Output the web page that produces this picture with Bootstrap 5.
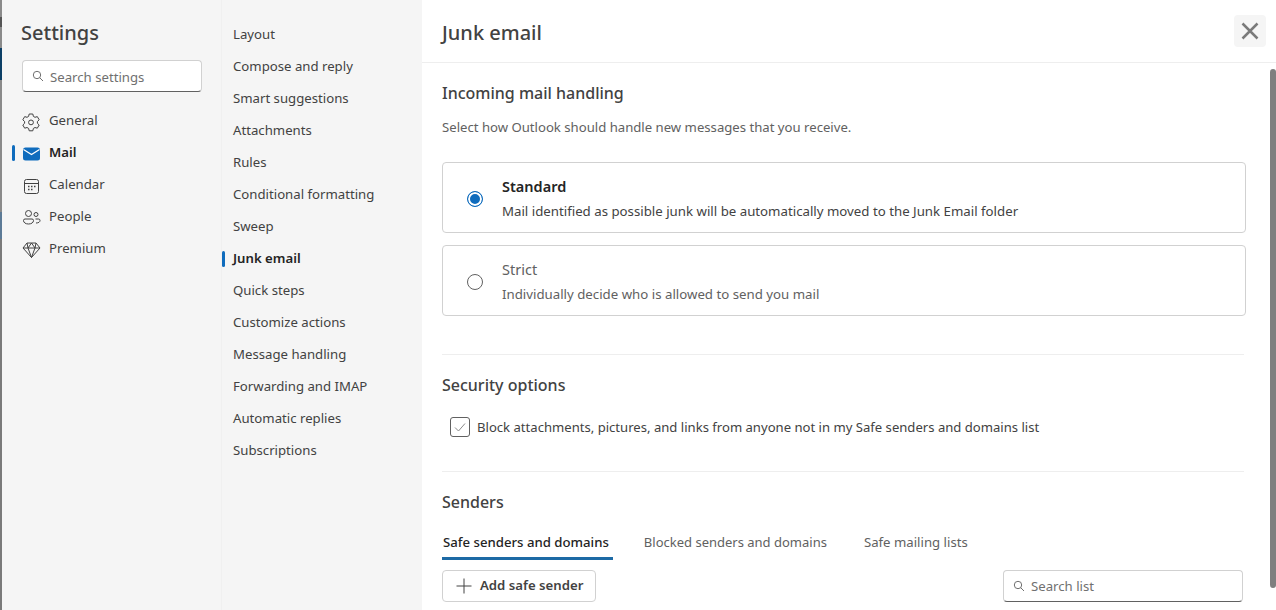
<!DOCTYPE html>
<html lang="en">
<head>
<meta charset="utf-8">
<title>Settings</title>
<link href="https://cdn.jsdelivr.net/npm/bootstrap@5.3.0/dist/css/bootstrap.min.css" rel="stylesheet">
<style>
html,body{height:610px;overflow:hidden}
body{font-family:"Noto Sans","Open Sans",sans-serif;font-size:13.2px;color:#424242;background:#fff}
.shell{height:610px;width:1276px}
.edge{width:2px;flex:none;background:linear-gradient(#8a8a8a 0 17px,#555 17px 27px,#8a8a8a 27px 48px,#0c3f66 48px 80px,#8a8a8a 80px 212px,#5c7a96 212px 239px,#7a7a7a 239px)}
.side-a{width:220px;flex:none;background:#f5f5f5;border-right:1px solid #f0f0f0}
.side-b{width:200px;flex:none;background:#f5f5f5}
.main-pane{width:854px;flex:none}
.app-title{font-size:20px;font-weight:500;line-height:28px;margin:19px 0 0 19px;color:#424242}
.search-box{background:#fff;border:1px solid #d1d1d1;border-bottom-color:#616161;border-radius:4px;color:#707070;font-size:13.2px;gap:6px;padding:0 0 0 9px}
.search-box span{padding-top:3px}
.search-a{width:180px;height:32px;margin:13px 0 0 20px}
.nav-one{margin-top:13px}
.nav-one-item{height:32px;padding-left:19px;position:relative;gap:8px}
.nav-one-item svg{flex:none;margin-top:1px}
.nav-one-item.on{font-weight:600;color:#242424}
.nav-one-item.on::before{content:"";position:absolute;left:10px;top:8px;width:3px;height:16px;background:#0f6cbd;border-radius:2px}
.nav-two{margin-top:19px}
.nav-two-item{height:32px;padding-left:11px;position:relative;display:flex;align-items:center}
.nav-two-item.on{font-weight:600;color:#242424}
.nav-two-item.on::before{content:"";position:absolute;left:0;top:8px;width:3px;height:16px;background:#0f6cbd;border-radius:2px}
.pane-head{height:63px;border-bottom:1px solid #eee;padding:0 10px 0 20px}
.pane-title{font-size:20px;font-weight:500;color:#424242;margin:3px 0 0}
.close-x{width:32px;height:32px;background:#f5f5f5;border:0;border-radius:4px;padding:0}
.pane-body{padding:0 0 0 20px;position:relative;height:547px;overflow:hidden}
.thumb{position:absolute;right:0;top:6px;width:6px;height:519px;background:#7f7f7f;border-radius:3px}
.sec-title{font-size:16px;font-weight:500;color:#424242;line-height:22px;margin:0}
.sec-note{color:#616161;font-size:13.15px;line-height:20px;margin:13px 0 0}
.opt{width:804px;height:71px;border:1px solid #d1d1d1;border-radius:4px;padding:2px 0 0 24px;gap:19px;margin-bottom:12px}
.opt-dot{width:16px;height:16px;border:1px solid #616161;border-radius:50%;flex:none;background:#fff}
.opt-dot.sel{border-color:#0f6cbd;background:#0f6cbd;box-shadow:inset 0 0 0 2px #fff}
.opt-copy{margin-top:-1px}
.opt-name{font-size:14.5px;line-height:20px;color:#616161}
.opt-name.sel{font-weight:600;color:#242424}
.opt-text{font-size:13.25px;line-height:18px;margin-top:6px;color:#616161}
.opt-text.sel{color:#424242}
.rule{width:802px;border-top:1px solid #eee}
.chk{width:20px;height:20px;border:1px solid #616161;border-radius:3px;flex:none;background:#fff}
.chk-text{font-size:13.1px;padding-top:1px}
.tab-link{padding-bottom:6px;font-size:13.2px;line-height:18px;color:#616161;border-bottom:3px solid transparent}
.tab-link.on{color:#242424;font-weight:500;border-bottom-color:#1d6aa5;padding-left:1px;padding-right:4px}
.tab-mid{font-size:13px}
.tab-last{margin-left:6px}
.add-btn{height:32px;width:154px;border:1px solid #d1d1d1;border-radius:4px;background:#fff;font-weight:600;color:#424242;font-size:13.2px;padding:0 0 0 13px;gap:8px}
.search-b{width:240px;height:32px;margin-right:33px}
</style>
</head>
<body>
<div class="shell d-flex">
  <div class="edge"></div>
  <div class="side-a d-flex flex-column">
    <div class="app-title">Settings</div>
    <div class="search-box search-a d-flex align-items-center">
      <svg width="12" height="12" viewBox="0 0 12 12" fill="none" stroke="#707070"><circle cx="5" cy="5" r="3.7"/><path d="M7.7 7.7 11 11"/></svg>
      <span>Search settings</span>
    </div>
    <div class="nav-one">
      <div class="nav-one-item d-flex align-items-center">
        <svg width="20" height="20" viewBox="0 0 20 20" fill="none" stroke="#424242" stroke-width="1"><path d="M8.2 2h3.6l.6 2.400 1.600.9 2.300-.7 1.900 3.200-1.800 1.700v1.800l1.800 1.700-1.900 3.200-2.300-.7-1.600.9-.6 2.400H8.200l-.6-2.400-1.600-.9-2.300.7-1.900-3.200 1.800-1.700V9.500L1.800 7.800l1.900-3.200 2.300.7 1.600-.9z"/><circle cx="10" cy="10.400" r="2.400"/></svg>
        <span>General</span>
      </div>
      <div class="nav-one-item on d-flex align-items-center">
        <svg width="20" height="20" viewBox="0 0 20 20"><rect x="2" y="3.500" width="17" height="13" rx="2.500" fill="#0f6cbd"/><path d="M2.500 5.500 10.500 10.500l8-5" fill="none" stroke="#fff" stroke-width="1.200"/></svg>
        <span>Mail</span>
      </div>
      <div class="nav-one-item d-flex align-items-center">
        <svg width="20" height="20" viewBox="0 0 20 20" fill="none" stroke="#424242"><rect x="3.500" y="3.500" width="14" height="14" rx="2"/><path d="M3.500 7.500h14"/><path d="M7 10.500h1.500M10 10.500h1.500M13 10.500h1.500M7 13.500h1.500M10 13.500h1.500" stroke-width="1.300"/></svg>
        <span>Calendar</span>
      </div>
      <div class="nav-one-item d-flex align-items-center">
        <svg width="20" height="20" viewBox="0 0 20 20" fill="none" stroke="#424242"><circle cx="7.500" cy="5.500" r="3"/><circle cx="15" cy="6.500" r="2"/><path d="M2.500 12.500a1.500 1.500 0 0 1 1.500-1.500h7a1.500 1.500 0 0 1 1.500 1.500c0 2.200-2.200 3.500-5 3.500s-5-1.300-5-3.500z"/><path d="M14.500 11h3a1.500 1.500 0 0 1 1.500 1.500c0 1.500-1.500 2.500-4 2.500"/></svg>
        <span>People</span>
      </div>
      <div class="nav-one-item d-flex align-items-center">
        <svg width="20" height="20" viewBox="0 0 20 20" fill="none" stroke="#424242"><path d="M6 3h9l4 5-8.500 9.500L2 8z"/><path d="M2 8h17M7 8l3.500 9.500L14 8l-3.500-5zM6 3l1 5M15 3l-1 5"/></svg>
        <span>Premium</span>
      </div>
    </div>
  </div>
  <div class="side-b">
    <div class="nav-two">
      <div class="nav-two-item">Layout</div>
      <div class="nav-two-item">Compose and reply</div>
      <div class="nav-two-item">Smart suggestions</div>
      <div class="nav-two-item">Attachments</div>
      <div class="nav-two-item">Rules</div>
      <div class="nav-two-item">Conditional formatting</div>
      <div class="nav-two-item">Sweep</div>
      <div class="nav-two-item on">Junk email</div>
      <div class="nav-two-item">Quick steps</div>
      <div class="nav-two-item">Customize actions</div>
      <div class="nav-two-item">Message handling</div>
      <div class="nav-two-item">Forwarding and IMAP</div>
      <div class="nav-two-item">Automatic replies</div>
      <div class="nav-two-item">Subscriptions</div>
    </div>
  </div>
  <div class="main-pane">
    <div class="pane-head d-flex align-items-center justify-content-between">
      <h1 class="pane-title">Junk email</h1>
      <button class="close-x d-flex align-items-center justify-content-center" aria-label="Close">
        <svg width="18" height="18" viewBox="0 0 18 18" stroke="#7a7a7a" stroke-width="2.500"><path d="M1.500 1.500l15 15M16.500 1.500l-15 15"/></svg>
      </button>
    </div>
    <div class="pane-body">
      <div class="thumb"></div>
      <h2 class="sec-title" style="margin-top:19px">Incoming mail handling</h2>
      <p class="sec-note">Select how Outlook should handle new messages that you receive.</p>
      <div class="opt d-flex align-items-center" style="margin-top:25px">
        <span class="opt-dot sel"></span>
        <div class="opt-copy">
          <div class="opt-name sel">Standard</div>
          <div class="opt-text sel">Mail identified as possible junk will be automatically moved to the Junk Email folder</div>
        </div>
      </div>
      <div class="opt d-flex align-items-center">
        <span class="opt-dot"></span>
        <div class="opt-copy">
          <div class="opt-name">Strict</div>
          <div class="opt-text">Individually decide who is allowed to send you mail</div>
        </div>
      </div>
      <div class="rule" style="margin-top:38px"></div>
      <h2 class="sec-title" style="margin-top:19px">Security options</h2>
      <div class="d-flex align-items-center" style="margin:21px 0 0 8px;gap:7px">
        <span class="chk d-flex align-items-center justify-content-center">
          <svg width="14" height="14" viewBox="0 0 14 14" fill="none" stroke="#8a8a8a"><path d="M2 7.500 5.500 11 12 3.500"/></svg>
        </span>
        <span class="chk-text">Block attachments, pictures, and links from anyone not in my Safe senders and domains list</span>
      </div>
      <div class="rule" style="margin-top:33px"></div>
      <h2 class="sec-title" style="margin-top:19px">Senders</h2>
      <div class="d-flex" style="margin-top:20px;gap:31px">
        <span class="tab-link on">Safe senders and domains</span>
        <span class="tab-link tab-mid">Blocked senders and domains</span>
        <span class="tab-link tab-last">Safe mailing lists</span>
      </div>
      <div class="d-flex justify-content-between align-items-center" style="margin-top:10px">
        <button class="add-btn d-flex align-items-center">
          <svg width="16" height="16" viewBox="0 0 16 16" stroke="#424242"><path d="M8 .5v15M.5 8h15"/></svg>
          <span>Add safe sender</span>
        </button>
        <div class="search-box search-b d-flex align-items-center">
          <svg width="12" height="12" viewBox="0 0 12 12" fill="none" stroke="#707070"><circle cx="5" cy="5" r="3.700"/><path d="M7.700 7.700 11 11"/></svg>
          <span>Search list</span>
        </div>
      </div>
    </div>
  </div>
</div>
<script src="https://cdn.jsdelivr.net/npm/bootstrap@5.3.0/dist/js/bootstrap.bundle.min.js"></script>
</body>
</html>
